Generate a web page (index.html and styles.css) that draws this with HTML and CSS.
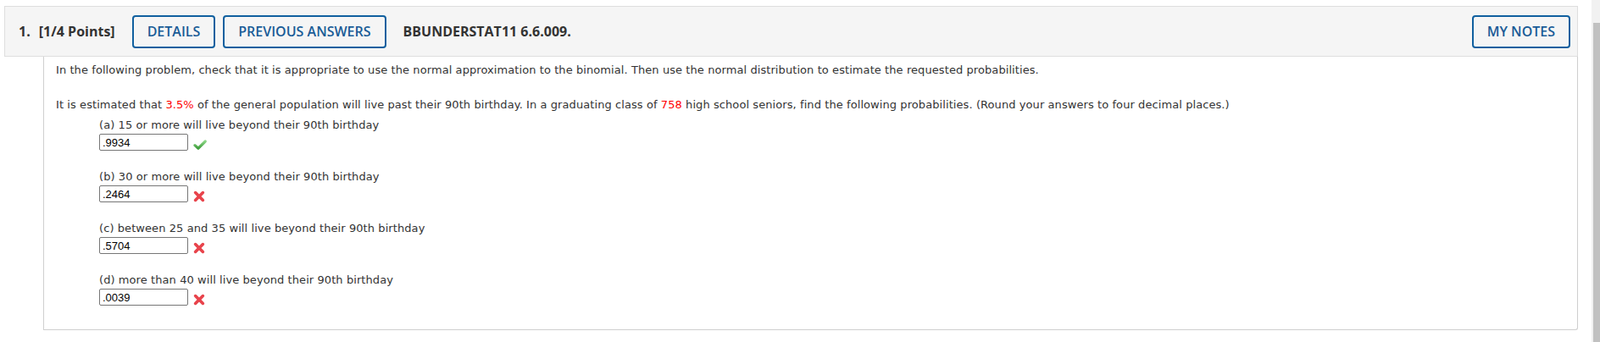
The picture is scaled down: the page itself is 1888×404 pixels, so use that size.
FILE: index.html
```html
<!DOCTYPE html>
<html>
<head>
<meta charset="utf-8">
<link rel="stylesheet" href="styles.css">
</head>
<body>
<div class="page">
  <div class="main">
    <div class="qheader">
      <span class="qnum">1.</span>
      <span class="qpts">[1/4 Points]</span>
      <button class="btn btn-details">DETAILS</button>
      <button class="btn btn-prev">PREVIOUS ANSWERS</button>
      <span class="qref">BBUNDERSTAT11 6.6.009.</span>
      <span class="spacer"></span>
      <button class="btn btn-notes">MY NOTES</button>
    </div>
    <div class="qbody">
      <p class="intro">In the following problem, check that it is appropriate to use the normal approximation to the binomial. Then use the normal distribution to estimate the requested probabilities.</p>
      <p class="stem">It is estimated that <span class="red">3.5%</span> of the general population will live past their 90th birthday. In a graduating class of <span class="red">758</span> high school seniors, find the following probabilities. (Round your answers to four decimal places.)</p>
      <div class="part">
        <div class="plabel">(a) 15 or more will live beyond their 90th birthday</div>
        <div class="prow">
          <input class="ans" type="text" value=".9934">
          <svg class="mark" width="16" height="14" viewBox="0 0 16 14"><defs><linearGradient id="g" x1="0" y1="0" x2="0" y2="1"><stop offset="0" stop-color="#8ad585"/><stop offset="1" stop-color="#3f9e3c"/></linearGradient></defs><path d="M2 7.6 L6 11.2 L14.2 3" stroke="url(#g)" stroke-width="3.2" fill="none" stroke-linecap="round" stroke-linejoin="round"/></svg>
        </div>
      </div>
      <div class="part">
        <div class="plabel">(b) 30 or more will live beyond their 90th birthday</div>
        <div class="prow">
          <input class="ans" type="text" value=".2464">
          <svg class="mark" width="14" height="14" viewBox="0 0 14 14"><path d="M2.6 2.6 L11.4 11.4 M11.4 2.6 L2.6 11.4" stroke="#e8434b" stroke-width="3.6" stroke-linecap="round"/></svg>
        </div>
      </div>
      <div class="part">
        <div class="plabel">(c) between 25 and 35 will live beyond their 90th birthday</div>
        <div class="prow">
          <input class="ans" type="text" value=".5704">
          <svg class="mark" width="14" height="14" viewBox="0 0 14 14"><path d="M2.6 2.6 L11.4 11.4 M11.4 2.6 L2.6 11.4" stroke="#e8434b" stroke-width="3.6" stroke-linecap="round"/></svg>
        </div>
      </div>
      <div class="part">
        <div class="plabel">(d) more than 40 will live beyond their 90th birthday</div>
        <div class="prow">
          <input class="ans" type="text" value=".0039">
          <svg class="mark" width="14" height="14" viewBox="0 0 14 14"><path d="M2.6 2.6 L11.4 11.4 M11.4 2.6 L2.6 11.4" stroke="#e8434b" stroke-width="3.6" stroke-linecap="round"/></svg>
        </div>
      </div>
    </div>
  </div>
  <div class="scrollbar"><div class="thumb"></div></div>
</div>
</body>
</html>
```
FILE: styles.css
```css
* { box-sizing: border-box; }
html, body { margin: 0; padding: 0; background: #fff; }
body { font-family: "DejaVu Sans", Verdana, sans-serif; color: #333; }

.page {
  display: flex;
  justify-content: space-between;
  height: 404px;
  overflow: hidden;
}
.main {
  width: 1862px;
  padding: 7px 0 0 5px;
}
.qheader {
  display: flex;
  align-items: center;
  height: 60px;
  border: 1px solid #dedede;
  background: #f5f5f5;
  padding: 0 8px 0 16px;
  font-family: "Open Sans", sans-serif;
  font-weight: 700;
  font-size: 16px;
  color: #333;
}
.qnum { margin-right: 10px; }
.qpts { margin-right: 20px; }
.btn {
  height: 39px;
  border: 2px solid #10609f;
  border-radius: 4px;
  background: transparent;
  color: #1a5c97;
  font-family: "Open Sans", sans-serif;
  font-weight: 600;
  font-size: 16px;
  padding: 0 16px;
  margin: 0;
}
.btn-details { margin-right: 9px; }
.btn-prev { margin-right: 20px; }
.spacer { flex: 1; }

.qbody {
  margin-left: 46px;
  border: 1px solid #cfcfcf;
  border-top: none;
  border-bottom-right-radius: 3px;
  padding: 6px 14px 7px 14px;
  font-size: 13px;
  line-height: 20px;
  letter-spacing: 0.08px;
}
.qbody p { margin: 0; }
.intro { margin-bottom: 21px !important; }
.stem { margin-bottom: 4px !important; }
.red { color: #f00; }

.part {
  margin-left: 51px;
  margin-bottom: 21px;
}
.plabel { height: 20px; }
.prow {
  display: flex;
  align-items: flex-end;
  height: 20px;
}
.ans {
  width: 105px;
  height: 20px;
  border: 1px solid #767676;
  border-radius: 2px;
  padding: 0 3px;
  font-family: "Liberation Sans", Arial, sans-serif;
  font-size: 13px;
  letter-spacing: 0;
  color: #000;
  background: #fff;
}
.mark { margin-left: 6px; }

.scrollbar {
  width: 10px;
  height: 404px;
  background: #f1f1f1;
  display: flex;
}
.thumb {
  margin: 27px 0 0 2px;
  flex: 1;
  background: #c1c1c1;
}
```
